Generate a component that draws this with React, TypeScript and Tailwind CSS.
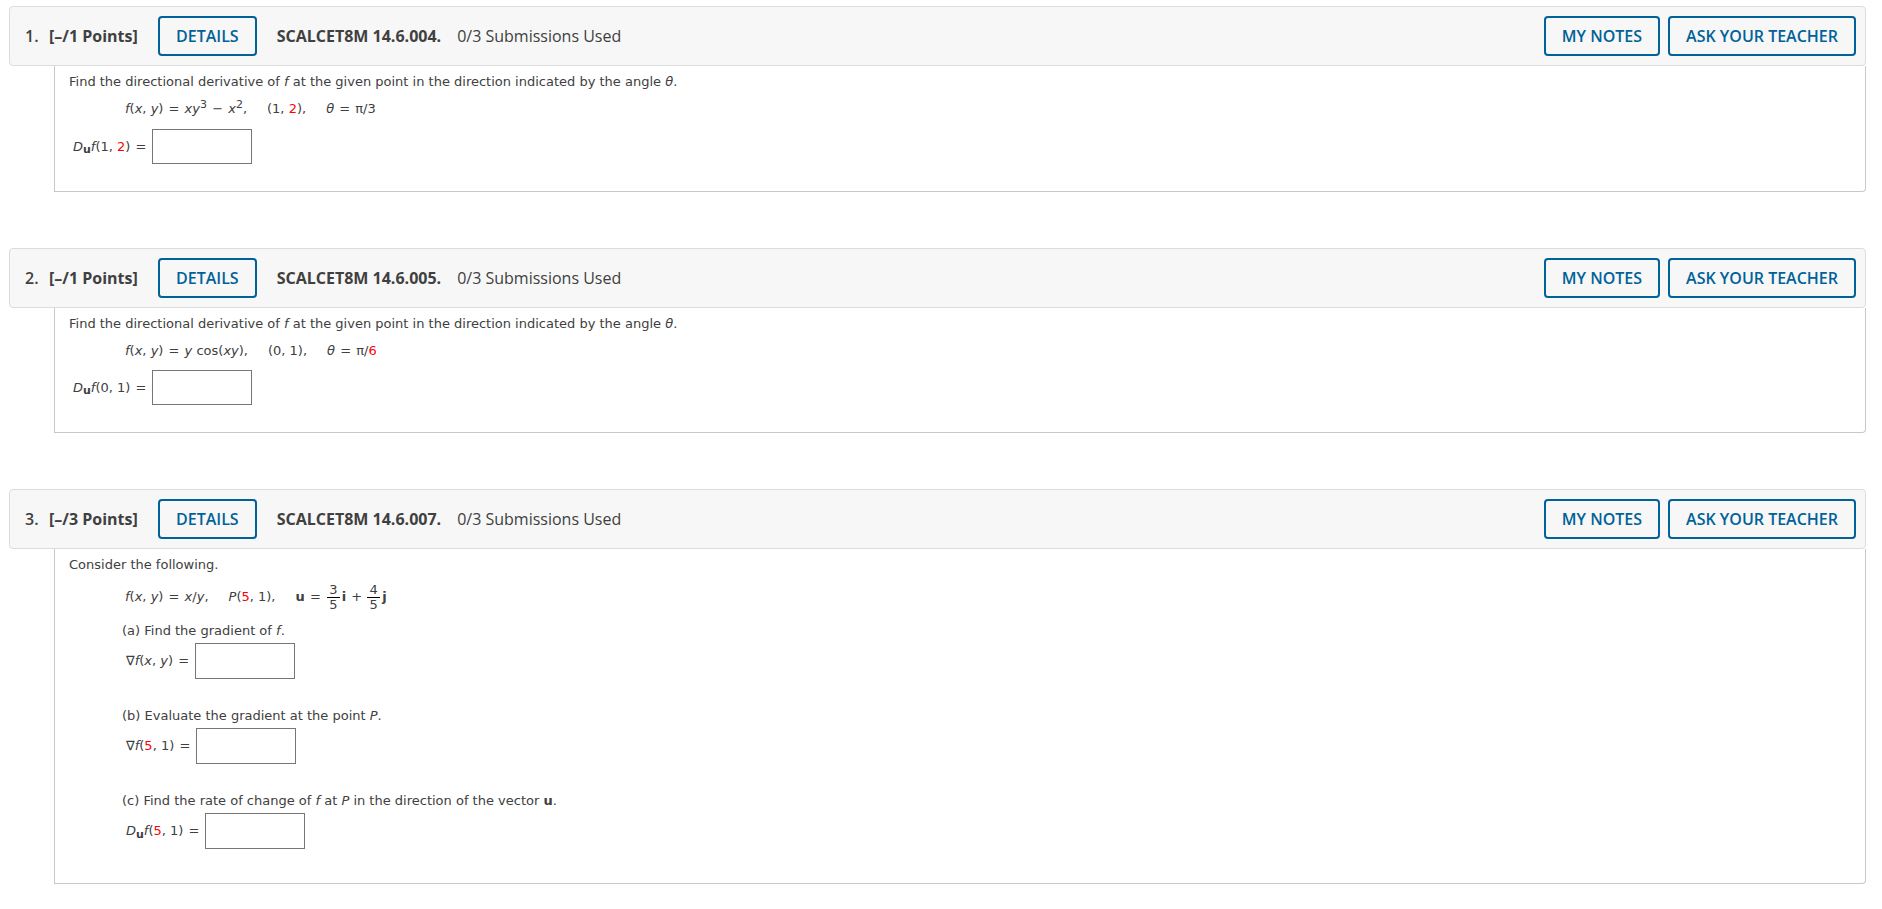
import type { ReactNode } from "react";

// Small maths helpers, so the questions below read like prose.

/** A value that was randomised for this student. */
function R({ children }: { children: ReactNode }) {
  return <span className="text-[#ff0000]">{children}</span>;
}

/** An operator, with a little more air than the words around it. */
function Op({ children }: { children: ReactNode }) {
  return <span className="mx-px">{children}</span>;
}

function Sup({ children }: { children: ReactNode }) {
  return <sup className="text-[11px]">{children}</sup>;
}

function Du() {
  return (
    <>
      <i>D</i>
      <sub className="text-[11px] font-bold">u</sub>
    </>
  );
}

function Frac({ top, bottom }: { top: string; bottom: string }) {
  return (
    <span className="inline-flex w-[13px] flex-col items-center text-[13px] leading-[14px]">
      <span>{top}</span>
      <span className="w-full border-t border-black text-center">{bottom}</span>
    </span>
  );
}

function Answer({
  id,
  children,
  className = "",
  box = "h-9",
}: {
  id: string;
  children: ReactNode;
  className?: string;
  box?: string;
}) {
  return (
    <div className={`flex items-center gap-[5px] ${className}`}>
      <label htmlFor={id} className="whitespace-nowrap">
        {children}
      </label>
      <input
        id={id}
        type="text"
        className={`w-[100px] border border-[#767676] bg-white px-1 outline-none ${box}`}
      />
    </div>
  );
}

function OutlineButton({ children }: { children: ReactNode }) {
  return (
    <button
      type="button"
      className="h-10 rounded border-2 border-[#006298] px-4 font-semibold whitespace-nowrap text-[#006298]"
    >
      {children}
    </button>
  );
}

function Question({
  number,
  points,
  code,
  children,
}: {
  number: number;
  points: string;
  code: string;
  children: ReactNode;
}) {
  return (
    <section>
      <header className="flex items-center rounded-sm border border-[#dcdcdc] bg-[#f7f7f7] py-[9px] pr-[9px] pl-[15px] font-['Open_Sans',sans-serif] text-base">
        <h2 className="flex items-center whitespace-nowrap">
          <span className="w-6 font-semibold">{number}.</span>
          <span className="w-[109px] font-bold">[–/{points} Points]</span>
        </h2>
        <OutlineButton>DETAILS</OutlineButton>
        <span className="ml-5 font-bold whitespace-nowrap">{code}</span>
        <span className="ml-4 whitespace-nowrap">0/3 Submissions Used</span>
        <div className="ml-auto flex gap-2">
          <OutlineButton>MY NOTES</OutlineButton>
          <OutlineButton>ASK YOUR TEACHER</OutlineButton>
        </div>
      </header>
      <div className="ml-[45px] rounded-br border-x border-b border-[#c8c8c8] pt-[7px] pl-[14px]">
        {children}
      </div>
    </section>
  );
}

function DirectionalIntro() {
  return (
    <p>
      Find the directional derivative of <i>f</i> at the given point in the direction indicated by
      the angle <i>θ</i>.
    </p>
  );
}

export default function App() {
  return (
    <main className="flex flex-col gap-14 bg-white pt-[6px] pr-4 pb-6 pl-[9px] font-[Verdana,'DejaVu_Sans',sans-serif] text-[13px] leading-[18px] text-[#404040]">
      <Question number={1} points="1" code="SCALCET8M 14.6.004.">
        <DirectionalIntro />
        <div className="mt-[9px] flex gap-5 pl-14">
          <span>
            <i>f</i>(<i>x</i>, <i>y</i>) <Op>=</Op> <i>xy</i>
            <Sup>3</Sup> <Op>−</Op> <i>x</i>
            <Sup>2</Sup>,
          </span>
          <span>
            (1, <R>2</R>),
          </span>
          <span>
            <i>θ</i> <Op>=</Op> π/3
          </span>
        </div>
        <Answer id="q1" className="mt-[11px] mb-[27px] pl-1" box="h-[35px]">
          <Du />
          <i>f</i>(1, <R>2</R>) <Op>=</Op>
        </Answer>
      </Question>

      <Question number={2} points="1" code="SCALCET8M 14.6.005.">
        <DirectionalIntro />
        <div className="mt-[9px] flex gap-5 pl-14">
          <span>
            <i>f</i>(<i>x</i>, <i>y</i>) <Op>=</Op> <i>y</i> cos(<i>xy</i>),
          </span>
          <span>(0, 1),</span>
          <span>
            <i>θ</i> <Op>=</Op> π/<R>6</R>
          </span>
        </div>
        <Answer id="q2" className="mt-[10px] mb-[27px] pl-1" box="h-[35px]">
          <Du />
          <i>f</i>(0, 1) <Op>=</Op>
        </Answer>
      </Question>

      <Question number={3} points="3" code="SCALCET8M 14.6.007.">
        <p>Consider the following.</p>
        <div className="mt-2 flex h-[30px] items-center gap-5 pl-14">
          <span>
            <i>f</i>(<i>x</i>, <i>y</i>) <Op>=</Op> <i>x</i>/<i>y</i>,
          </span>
          <span>
            <i>P</i>(<R>5</R>, 1),
          </span>
          <span className="flex items-center">
            <span className="mr-[5px]">
              <b>u</b> <Op>=</Op>
            </span>
            <Frac top="3" bottom="5" />
            <b className="ml-0.5">i</b>
            <span className="mx-[5px]">+</span>
            <Frac top="4" bottom="5" />
            <b className="ml-0.5">j</b>
          </span>
        </div>

        <div className="mt-[10px] mb-[34px] flex flex-col gap-7 pl-[53px]">
          <div>
            <p>
              (a) Find the gradient of <i>f</i>.
            </p>
            <Answer id="q3a" className="mt-[3px] pl-1">
              ∇<i>f</i>(<i>x</i>, <i>y</i>) <Op>=</Op>
            </Answer>
          </div>
          <div>
            <p>
              (b) Evaluate the gradient at the point <i>P</i>.
            </p>
            <Answer id="q3b" className="mt-[3px] pl-1">
              ∇<i>f</i>(<R>5</R>, 1) <Op>=</Op>
            </Answer>
          </div>
          <div>
            <p>
              (c) Find the rate of change of <i>f</i> at <i>P</i> in the direction of the vector{" "}
              <b>u</b>.
            </p>
            <Answer id="q3c" className="mt-[3px] pl-1">
              <Du />
              <i>f</i>(<R>5</R>, 1) <Op>=</Op>
            </Answer>
          </div>
        </div>
      </Question>
    </main>
  );
}
